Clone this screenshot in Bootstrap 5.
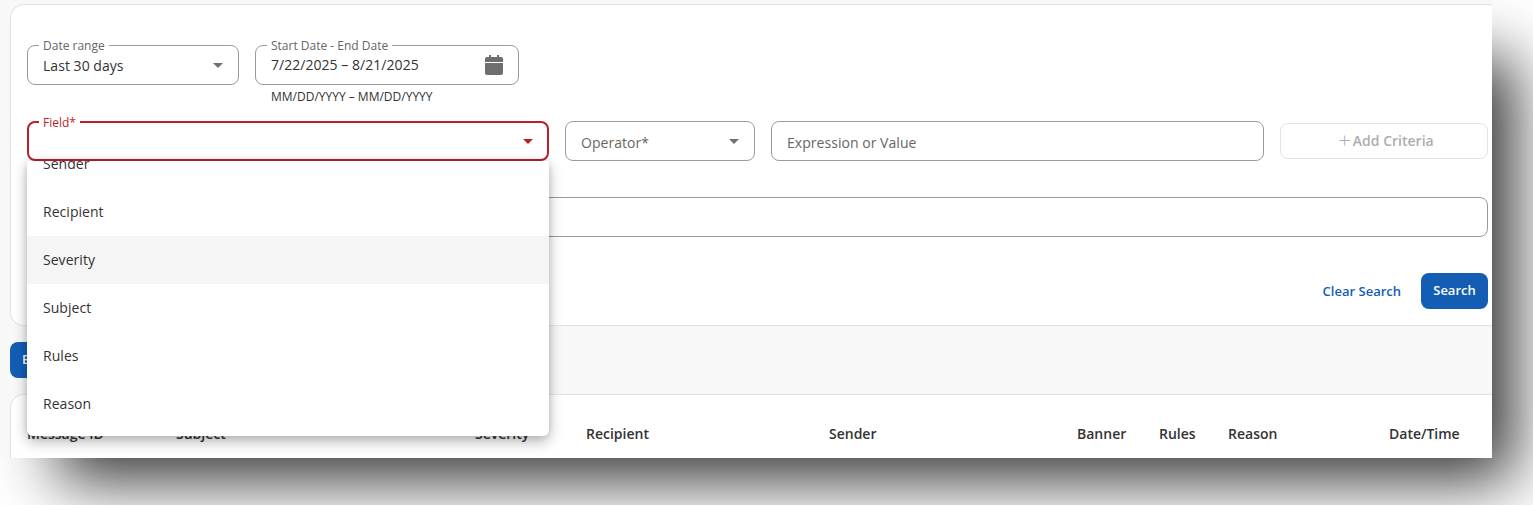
<!DOCTYPE html>
<html lang="en">
<head>
<meta charset="utf-8">
<title>Search</title>
<link href="https://cdn.jsdelivr.net/npm/bootstrap@5.3.0/dist/css/bootstrap.min.css" rel="stylesheet">
<style>
html,body{height:505px;overflow:hidden;background:#fff;}
body{font-family:"Open Sans","Liberation Sans",sans-serif;font-size:14px;color:#333;}
.shot{width:1492px;height:458px;background:#f8f8f8;overflow:hidden;position:relative;padding:4px 0 0 10px;}
.shot-wrap{width:1492px;height:458px;box-shadow:40px 40px 60px -18px rgba(0,0,0,.8);}
.panel{height:322px;background:#fff;border:1px solid #e3e3e3;border-right:0;border-radius:14px 0 0 14px;padding:40px 4px 0 16px;}
.fld{position:relative;height:40px;border:1px solid #9a9a9a;border-radius:8px;padding:0 15px;background:#fff;letter-spacing:.04px;}
.fld-label{position:absolute;left:11px;top:-8px;padding:0 4px;background:#fff;font-size:12px;line-height:16px;color:#666;letter-spacing:0;}
.fld-value{color:#333;}
.fld-ph{color:#666;padding-top:2px;}
.fld-date{padding-bottom:2px;}
.fld-date svg{margin-top:2px;}
.fld-caret{width:0;height:0;border-left:5px solid transparent;border-right:5px solid transparent;border-top:5px solid #707070;margin-left:auto;}
.w-range{width:212px}.w-date{width:264px}.w-field{width:522px}.w-op{width:190px}.w-expr{width:493px}
.w-add{width:208px;height:36px;}
.hint{font-size:12px;line-height:16px;color:#333;margin-top:4px;margin-left:228px;padding-left:16px;}
.fld-err{border:2px solid #bc1f27;padding:0 14px;}
.fld-err .fld-label{color:#bc1f27;left:10px;top:-8px;}
.fld-err .fld-caret{border-top-color:#bc1f27;}
.btn-add{border:1px solid #e2e2e2;border-radius:8px;background:#fff;color:#adadad;font-size:14px;font-weight:600;line-height:20px;padding:0 0 0 4px!important;}
.btn-add:disabled{color:#adadad;border-color:#e2e2e2;opacity:1;}
.add-plus{font-weight:300;font-size:22px;line-height:16px;margin-right:2px;vertical-align:-2px;}
.row-2{margin-top:16px;}
.row-3{margin-top:36px;}
.row-4{margin-top:36px;}
.link-clear{color:#145db5;font-size:13px;font-weight:600;text-decoration:none;margin-right:4px;padding-top:2px;}
.btn-go{background:#145db5;border:0;border-radius:8px;color:#fff;font-size:13px;font-weight:600;height:36px;width:67px;padding:0;}
.toolbar{height:68px;padding-top:16px;}
.btn-export{background:#145db5;border:0;border-radius:8px;color:#fff;font-size:13px;font-weight:600;height:36px;width:120px;padding:0 12px;text-align:left;}
.results{background:#fff;border:1px solid #e3e3e3;border-right:0;border-radius:14px 0 0 0;height:80px;}
.res-table{table-layout:fixed;width:1482px;margin:0;}
.res-table th{border:0;padding:29px 0 0;font-size:14px;font-weight:600;line-height:20px;color:#333;background:transparent;white-space:nowrap;}
.menu-pop{position:absolute;left:27px;top:161px;width:522px;height:275px;background:#fff;border-radius:0 0 6px 6px;box-shadow:0 6px 14px rgba(0,0,0,.28),0 0 6px rgba(0,0,0,.12);overflow:hidden;z-index:5;}
.menu-list{margin-top:-21px;}
.menu-opt{height:48px;padding:0 16px 2px;display:flex;align-items:center;color:#333;letter-spacing:.04px;}
.menu-opt.on{background:#f5f5f5;}
</style>
</head>
<body>
<div class="shot-wrap">
<div class="shot">
  <div class="panel">
    <div class="d-flex gap-3">
      <div class="fld w-range d-flex align-items-center"><span class="fld-label">Date range</span><span class="fld-value">Last 30 days</span><span class="fld-caret"></span></div>
      <div class="fld w-date fld-date d-flex align-items-center"><span class="fld-label">Start Date - End Date</span><span class="fld-value">7/22/2025 – 8/21/2025</span>
        <svg class="ms-auto" width="18" height="20" viewBox="0 0 18 20" aria-hidden="true"><path fill="#6e6e6e" d="M4 0h2v2h6V0h2v2h2a2 2 0 0 1 2 2v3H0V4a2 2 0 0 1 2-2h2zM0 8h18v10a2 2 0 0 1-2 2H2a2 2 0 0 1-2-2z"/></svg>
      </div>
    </div>
    <div class="hint">MM/DD/YYYY – MM/DD/YYYY</div>
    <div class="d-flex gap-3 align-items-center row-2">
      <div class="fld fld-err w-field d-flex align-items-center"><span class="fld-label">Field*</span><span class="fld-caret"></span></div>
      <div class="fld w-op d-flex align-items-center"><span class="fld-ph">Operator*</span><span class="fld-caret"></span></div>
      <div class="fld w-expr d-flex align-items-center"><span class="fld-ph">Expression or Value</span></div>
      <button class="btn btn-add w-add" type="button" disabled><span class="add-plus">+</span>Add Criteria</button>
    </div>
    <div class="fld row-3"></div>
    <div class="d-flex justify-content-end align-items-center gap-3 row-4">
      <a class="link-clear" href="#">Clear Search</a>
      <button class="btn btn-go" type="button">Search</button>
    </div>
  </div>
  <div class="toolbar"><button class="btn btn-export" type="button">Export</button></div>
  <div class="results">
    <table class="table res-table">
      <colgroup><col style="width:165px"><col style="width:299px"><col style="width:111px"><col style="width:243px"><col style="width:248px"><col style="width:82px"><col style="width:69px"><col style="width:161px"><col style="width:104px"></colgroup>
      <thead><tr><th style="padding-left:16px">Message ID</th><th>Subject</th><th>Severity</th><th>Recipient</th><th>Sender</th><th>Banner</th><th>Rules</th><th>Reason</th><th>Date/Time</th></tr></thead>
    </table>
  </div>
  <div class="menu-pop">
    <div class="menu-list">
      <div class="menu-opt">Sender</div>
      <div class="menu-opt">Recipient</div>
      <div class="menu-opt on">Severity</div>
      <div class="menu-opt">Subject</div>
      <div class="menu-opt">Rules</div>
      <div class="menu-opt">Reason</div>
    </div>
  </div>
</div>
</div>
<script src="https://cdn.jsdelivr.net/npm/bootstrap@5.3.0/dist/js/bootstrap.bundle.min.js"></script>
</body>
</html>
